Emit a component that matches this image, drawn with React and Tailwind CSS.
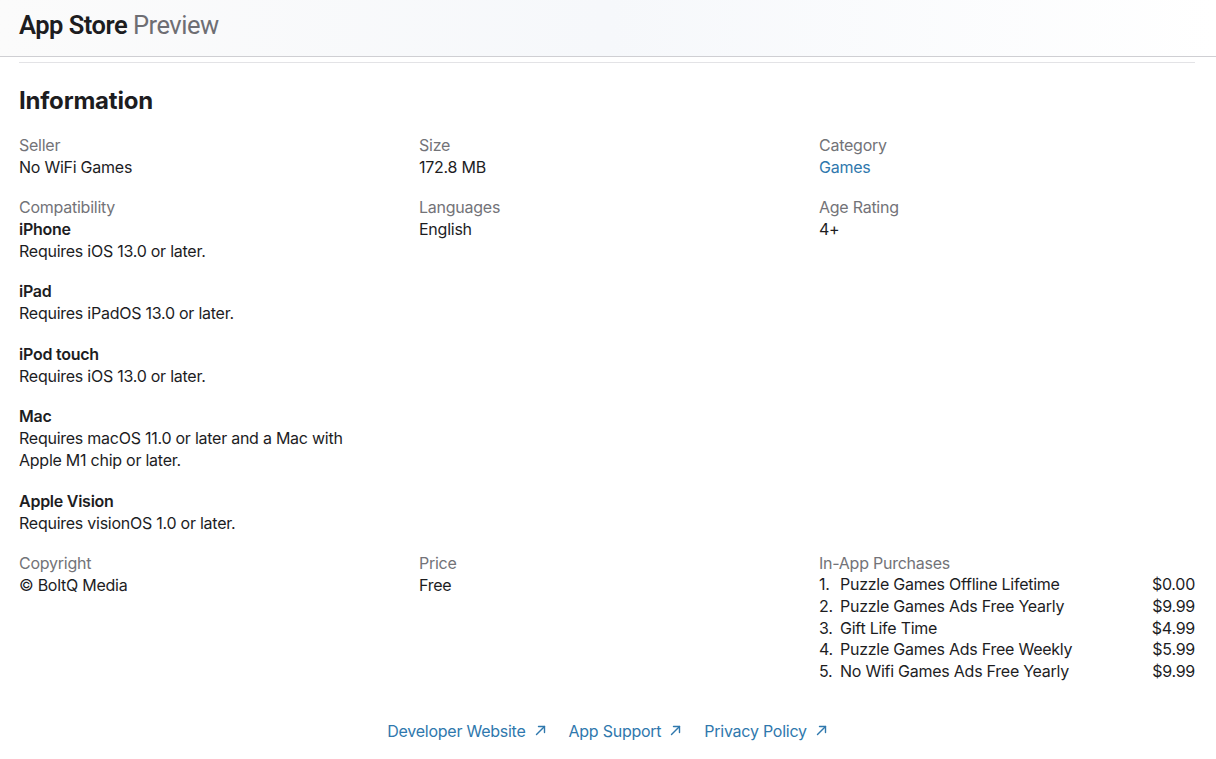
import React from "react";

const devices = [
  { name: "iPhone", lines: ["Requires iOS 13.0 or later."] },
  { name: "iPad", lines: ["Requires iPadOS 13.0 or later."] },
  { name: "iPod touch", lines: ["Requires iOS 13.0 or later."] },
  {
    name: "Mac",
    lines: ["Requires macOS 11.0 or later and a Mac with", "Apple M1 chip or later."],
  },
  { name: "Apple Vision", lines: ["Requires visionOS 1.0 or later."] },
];

const purchases = [
  ["Puzzle Games Offline Lifetime", "$0.00"],
  ["Puzzle Games Ads Free Yearly", "$9.99"],
  ["Gift Life Time", "$4.99"],
  ["Puzzle Games Ads Free Weekly", "$5.99"],
  ["No Wifi Games Ads Free Yearly", "$9.99"],
];

function Item({ label, children }) {
  return (
    <div className="mb-[18px]">
      <dt className="text-[#737378]">{label}</dt>
      <dd className="m-0 text-[#1d1d1f]">{children}</dd>
    </div>
  );
}

function Arrow() {
  return (
    <svg width="11" height="11" viewBox="0 0 11 11" fill="none" stroke="currentColor" strokeWidth="1.4" strokeLinecap="round" strokeLinejoin="round">
      <path d="M1.5 9.5 L9.5 1.5" />
      <path d="M3.5 1.5 H9.5 V7.5" />
    </svg>
  );
}

function ExternalLink({ children }) {
  return (
    <a href="#" className="flex items-center gap-[9px] text-[#2f78ad] no-underline">
      {children}
      <Arrow />
    </a>
  );
}

export default function App() {
  return (
    <div
      className="min-h-[759px] bg-white text-[16px] leading-[22px] tracking-[-0.25px] text-[#1d1d1f]"
      style={{ fontFamily: "Inter, 'Noto Sans', sans-serif" }}
    >
      <header className="flex h-[57px] items-center border-b border-[#cfcfd3] bg-gradient-to-r from-[#fbfbfb] via-[#f6f8fb] to-white px-[19px] pb-[4px]">
        <h1
          className="m-0 text-[25.5px] leading-none tracking-[-0.5px]"
          style={{ fontFamily: "'Liberation Sans Narrow', Roboto, sans-serif" }}
        >
          <span className="font-semibold text-[#1d1d1f]">App Store</span>{" "}
          <span className="text-[#6e6e73]">Preview</span>
        </h1>
      </header>

      <main className="pl-[19px] pr-[21px]">
        <div className="mt-[5px] border-t border-[#e3e3e6]" />
        <h2 className="m-0 mt-[23px] text-[24px] font-bold leading-[30px] tracking-[-0.2px]">
          Information
        </h2>

        <dl className="m-0 mt-[18px] grid grid-cols-3 gap-x-6">
          <Item label="Seller">No WiFi Games</Item>
          <Item label="Size">172.8 MB</Item>
          <Item label="Category">
            <a href="#" className="text-[#2f78ad] no-underline">Games</a>
          </Item>

          <Item label="Compatibility">
            {devices.map((d, i) => (
              <div key={d.name} className={i < devices.length - 1 ? "mb-[18.4px]" : ""}>
                <div className="font-semibold">{d.name}</div>
                {d.lines.map((l) => (
                  <div key={l}>{l}</div>
                ))}
              </div>
            ))}
          </Item>
          <Item label="Languages">English</Item>
          <Item label="Age Rating">4+</Item>

          <Item label="Copyright">© BoltQ Media</Item>
          <Item label="Price">Free</Item>
          <div>
            <dt className="text-[#737378]">In-App Purchases</dt>
            <dd className="m-0">
              <ol className="m-0 list-none p-0">
                {purchases.map(([name, price], i) => (
                  <li key={name} className="flex h-[21.6px] items-center justify-between">
                    <span className="flex">
                      <span className="w-[21px]">{i + 1}.</span>
                      <span>{name}</span>
                    </span>
                    <span>{price}</span>
                  </li>
                ))}
              </ol>
            </dd>
          </div>
        </dl>

        <div className="mt-[38px] flex justify-center gap-[23px]">
          <ExternalLink>Developer Website</ExternalLink>
          <ExternalLink>App Support</ExternalLink>
          <ExternalLink>Privacy Policy</ExternalLink>
        </div>
      </main>
    </div>
  );
}
